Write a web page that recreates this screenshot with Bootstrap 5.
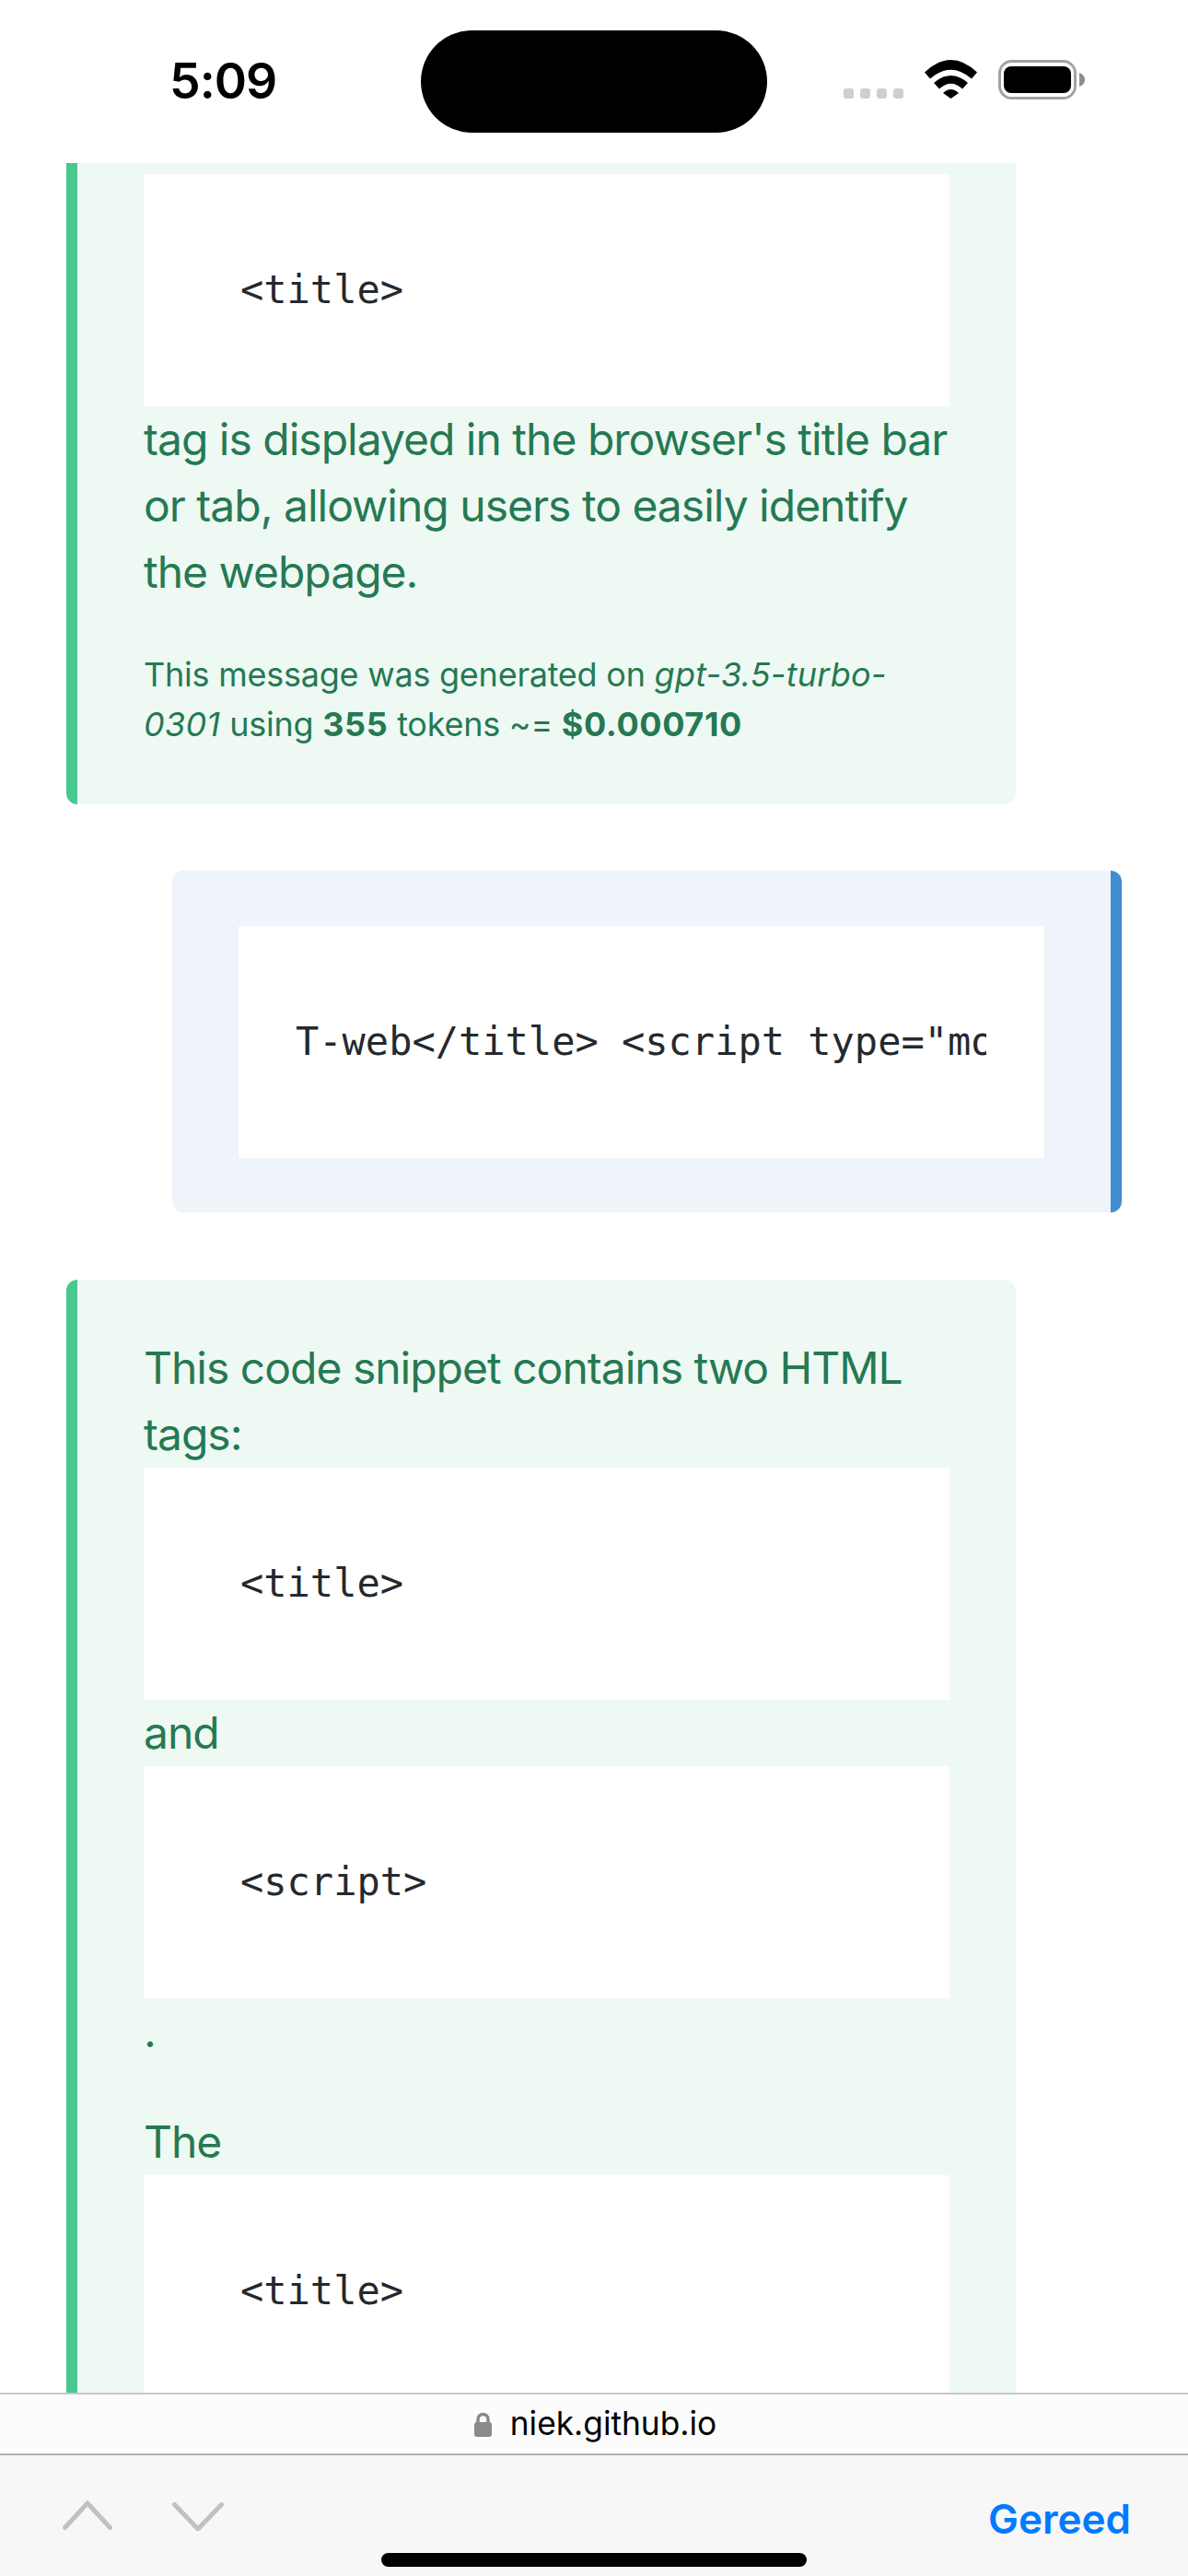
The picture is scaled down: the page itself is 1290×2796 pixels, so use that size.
<!doctype html>
<html lang="nl">
<head>
<meta charset="utf-8">
<title>niek.github.io</title>
<link rel="stylesheet" href="https://cdn.jsdelivr.net/npm/bootstrap@5.3.0/dist/css/bootstrap.min.css">
<style>
html,body{margin:0;background:#fff;font-family:Inter,"Liberation Sans",sans-serif}
.phone{width:1290px;height:2796px}
.status{height:177px;padding-top:33px}
.clock{width:115px;margin-left:184px;margin-top:23px;font-size:53.5px;line-height:64px;font-weight:600;color:#000;letter-spacing:-1px;white-space:nowrap}
.island{width:376px;height:111px;margin-left:158px;border-radius:56px;background:#000}
.dots{margin-left:83px;margin-top:63px;gap:7px}
.dots i{display:block;width:11px;height:11px;border-radius:3px;background:#cfcfcf}
.wifi{margin-left:23px;margin-top:32px}
.batt{margin-left:23px;margin-top:32px}
.feed{min-height:0;overflow:hidden}
.msg{width:1031px;border-radius:12px;font-size:48px;line-height:72px;letter-spacing:-1px}
.msg-ok{margin-left:72px;background:#eff9f4;color:#257953;border-left:12px solid #48c78e;padding:0 72px 60px 72px}
.msg-ok.cut{border-top-left-radius:0;border-top-right-radius:0;padding-top:12px}
.msg-ok.open{margin-top:73px;padding-top:60px}
.msg-info{margin-left:187px;margin-top:72px;background:#eff4fb;border-right:12px solid #3e8ed0;padding:60px 72px 59px 72px}
.snip{display:block;margin:0;height:252px;background:#fff;color:#24292e;font-family:"DejaVu Sans Mono",monospace;font-size:42px;letter-spacing:0;line-height:252px;padding:0 105px;white-space:pre;overflow:hidden}
.snip-wide{padding:0 63px 0 62px}
.snip-wide span{display:block;overflow:hidden}
.gap-line{margin:0 0 48px}
.plain{margin:0}
.meta{font-size:36px;line-height:54px;margin:0;letter-spacing:-.24px}
.meta em{letter-spacing:.25px}
.meta strong{letter-spacing:.6px}
.urlbar{height:68px;background:#fbfcfb;border-top:2px solid #c8c8c8;border-bottom:2px solid #b0b0b0;font-size:35.3px;color:#000;gap:20px;padding-left:3px}
.tools{height:131px;background:#f7f7f7;padding-top:49px}
.arrows{margin-left:68px;gap:65px}
.done{margin-left:auto;margin-right:62px;margin-top:-6px;color:#007aff;font-size:44px;line-height:52px;font-weight:600}
.home{width:462px;height:15px;border-radius:8px;background:#000;margin:11px auto 0}
</style>
</head>
<body>
<div class="phone d-flex flex-column">
  <div class="status d-flex align-items-start flex-shrink-0">
    <div class="clock">5:09</div>
    <div class="island"></div>
    <div class="dots d-flex"><i></i><i></i><i></i><i></i></div>
    <svg class="wifi" width="57" height="42" viewBox="0 0 57 42"><path fill="#000" d="M0 13.5Q28.5-13.5 57 13.5L51 20.500Q28.500 1 6 20.500ZM10 25Q28.500 9 47 25L41 31.500Q28.500 20 16 31.500ZM20 36Q28.500 28 37 36L28.500 42Z"/></svg>
    <svg class="batt" width="94" height="43" viewBox="0 0 94 43"><rect x="1.500" y="1.500" width="82" height="40" rx="13" fill="none" stroke="#a3a3a3" stroke-width="3"/><rect x="6" y="7" width="73" height="29" rx="8" fill="#000"/><path d="M88 14c3 1 6 3.500 6 7.500s-3 6.500-6 7.500z" fill="#8e8e8e"/></svg>
  </div>

  <div class="feed flex-grow-1">
    <div class="msg msg-ok cut">
      <code class="snip">&lt;title&gt;</code>
      <p class="gap-line">tag is displayed in the browser's title bar or tab, allowing users to easily identify the webpage.</p>
      <p class="meta">This message was generated on <em>gpt-3.5-turbo-0301</em> using <strong>355</strong> tokens ~= <strong>$0.000710</strong></p>
    </div>

    <div class="msg msg-info">
      <pre class="snip snip-wide"><span>T-web&lt;/title&gt; &lt;script type="module" crossorigin</span></pre>
    </div>

    <div class="msg msg-ok open">
      <p class="plain">This code snippet contains two HTML tags:</p>
      <code class="snip">&lt;title&gt;</code>
      <p class="plain">and</p>
      <code class="snip">&lt;script&gt;</code>
      <p class="gap-line">.</p>
      <p class="plain">The</p>
      <code class="snip">&lt;title&gt;</code>
    </div>
  </div>

  <div class="urlbar d-flex align-items-center justify-content-center flex-shrink-0">
    <svg width="19" height="27" viewBox="0 0 19 27"><path d="M4 12V8a5.500 5.500 0 0 1 11 0v4" fill="none" stroke="#8a8a8e" stroke-width="3.500"/><rect y="11" width="19" height="16" rx="3" fill="#8a8a8e"/></svg>
    <span>niek.github.io</span>
  </div>

  <div class="tools flex-shrink-0">
    <div class="d-flex align-items-start">
      <div class="arrows d-flex">
        <svg width="54" height="33" viewBox="0 0 54 33"><path d="M2.500 29.500 27 3 51.500 29.500" fill="none" stroke="#c1c1c1" stroke-width="5" stroke-linecap="round" stroke-linejoin="round"/></svg>
        <svg width="56" height="33" viewBox="0 0 56 33"><path d="M2.500 4.500 28 31 53.500 4.500" fill="none" stroke="#c1c1c1" stroke-width="5" stroke-linecap="round" stroke-linejoin="round"/></svg>
      </div>
      <div class="done">Gereed</div>
    </div>
    <div class="home"></div>
  </div>
</div>
<script src="https://cdn.jsdelivr.net/npm/bootstrap@5.3.0/dist/js/bootstrap.bundle.min.js"></script>
</body>
</html>
